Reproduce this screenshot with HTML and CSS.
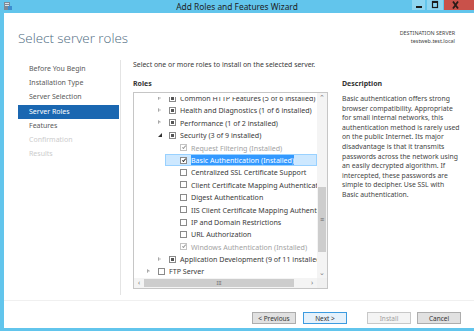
FILE: index.html
```html
<!DOCTYPE html>
<html lang="en">
<head>
<meta charset="UTF-8">
<meta name="viewport" content="width=device-width, initial-scale=1.0">
<title>Add Roles and Features Wizard</title>
<link rel="stylesheet" href="styles.css">
</head>
<body>
<!-- Barra de titulo -->
<div class="titlebar">
 <div class="app-icon">
  <svg width="10" height="10" viewBox="0 0 10 10">
   <rect x="1" y="1" width="6" height="8" fill="#7d8a96"/>
   <rect x="2" y="2" width="4" height="1" fill="#d9e2ea"/>
   <rect x="2" y="4" width="4" height="1" fill="#d9e2ea"/>
   <rect x="5" y="5" width="4" height="4" fill="#3b8ed0"/>
  </svg>
 </div>
 <div class="title">Add Roles and Features Wizard</div>
 <div class="caption-buttons">
  <span class="cap-btn cap-min"><svg width="13" height="10" viewBox="0 0 13 10"><rect x="4" y="6" width="6" height="2" fill="#1c1c1c"/></svg></span>
  <span class="cap-btn cap-max"><svg width="16" height="10" viewBox="0 0 16 10"><rect x="5.5" y="1.5" width="5" height="6" fill="none" stroke="#1c1c1c" stroke-width="1.2"/><rect x="5" y="1" width="6" height="2" fill="#1c1c1c"/></svg></span>
  <span class="cap-btn cap-close"><svg width="30" height="10" viewBox="0 0 30 10"><path d="M9 1.5 L14 8.5 M14 1.5 L9 8.5" stroke="#2a1a18" stroke-width="1.8"/></svg></span>
 </div>
</div>

<div class="frame">
 <!-- Encabezado -->
 <div class="header">
  <h1>Select server roles</h1>
  <div class="destination">
   <div>DESTINATION SERVER</div>
   <div>testweb.test.local</div>
  </div>
 </div>

 <div class="body">
  <!-- Pasos del asistente -->
  <ul class="steps">
   <li>Before You Begin</li>
   <li>Installation Type</li>
   <li>Server Selection</li>
   <li class="current">Server Roles</li>
   <li>Features</li>
   <li class="pending">Confirmation</li>
   <li class="pending">Results</li>
  </ul>

  <div class="main">
   <p class="intro">Select one or more roles to install on the selected server.</p>
   <div class="columns">
    <div class="roles">
     <div class="label">Roles</div>
     <div class="tree-box">
      <div class="tree-view">
       <ul class="tree">
        <li class="row lvl1"><span class="exp"></span><span class="cb part"></span><span>Common HTTP Features (5 of 6 installed)</span></li>
        <li class="row lvl1"><span class="exp"></span><span class="cb part"></span><span>Health and Diagnostics (1 of 6 installed)</span></li>
        <li class="row lvl1"><span class="exp"></span><span class="cb part"></span><span>Performance (1 of 2 installed)</span></li>
        <li class="row lvl1"><span class="exp open"></span><span class="cb part"></span><span>Security (3 of 9 installed)</span></li>
        <li class="row lvl2 off"><span class="exp none"></span><span class="cb on"></span><span>Request Filtering (Installed)</span></li>
        <li class="row lvl2 selected"><span class="exp none"></span><span class="cb on"></span><span class="sel-text">Basic Authentication (Installed)</span></li>
        <li class="row lvl2"><span class="exp none"></span><span class="cb"></span><span>Centralized SSL Certificate Support</span></li>
        <li class="row lvl2"><span class="exp none"></span><span class="cb"></span><span>Client Certificate Mapping Authentication</span></li>
        <li class="row lvl2"><span class="exp none"></span><span class="cb"></span><span>Digest Authentication</span></li>
        <li class="row lvl2"><span class="exp none"></span><span class="cb"></span><span>IIS Client Certificate Mapping Authentication</span></li>
        <li class="row lvl2"><span class="exp none"></span><span class="cb"></span><span>IP and Domain Restrictions</span></li>
        <li class="row lvl2"><span class="exp none"></span><span class="cb"></span><span>URL Authorization</span></li>
        <li class="row lvl2 off"><span class="exp none"></span><span class="cb on"></span><span>Windows Authentication (Installed)</span></li>
        <li class="row lvl1"><span class="exp"></span><span class="cb part"></span><span>Application Development (9 of 11 installed)</span></li>
        <li class="row lvl0"><span class="exp"></span><span class="cb"></span><span>FTP Server</span></li>
       </ul>
      </div>
      <div class="vscroll">
       <span class="arrow">&#8963;</span>
       <div class="vtrack"><div class="vthumb">&#8801;</div></div>
       <span class="arrow">&#8964;</span>
      </div>
      <div class="hscroll">
       <span class="arrow">&lsaquo;</span>
       <div class="htrack"><div class="hthumb">III</div></div>
       <span class="arrow">&rsaquo;</span>
      </div>
      <div class="corner"></div>
     </div>
    </div>

    <div class="description">
     <div class="label">Description</div>
     <p>Basic authentication offers strong<br>
      browser compatibility. Appropriate<br>
      for small internal networks, this<br>
      authentication method is rarely used<br>
      on the public Internet. Its major<br>
      disadvantage is that it transmits<br>
      passwords across the network using<br>
      an easily decrypted algorithm. If<br>
      intercepted, these passwords are<br>
      simple to decipher. Use SSL with<br>
      Basic authentication.</p>
    </div>
   </div>
  </div>
 </div>

 <!-- Botones -->
 <div class="footer">
  <button class="btn">&lt; Previous</button>
  <button class="btn default">Next &gt;</button>
  <button class="btn install" disabled>Install</button>
  <button class="btn">Cancel</button>
 </div>
</div>
</body>
</html>
```

FILE: styles.css
```css
body {
 margin: 0;
 width: 474px;
 height: 331px;
 overflow: hidden;
 font-family: "Noto Sans", "Open Sans", sans-serif;
 font-size: 7px;
 color: #3a3a3a;
 background: #62c5ec;
 display: flex;
 flex-direction: column;
}
ul {
 list-style: none;
 margin: 0;
 padding: 0;
}

/* barra de titulo */
.titlebar {
 height: 13px;
 display: grid;
 grid-template-columns: 1fr auto 1fr;
 align-items: start;
}
.app-icon {
 padding: 1px 0 0 3px;
 height: 10px;
}
.title {
 font-size: 8.4px;
 line-height: 13px;
 color: #1e1e1e;
}
.caption-buttons {
 justify-self: end;
 display: flex;
 height: 10px;
}
.cap-btn {
 display: block;
 height: 10px;
}
.cap-min {
 width: 13px;
 background: #8ed6f2;
 margin-right: 2px;
}
.cap-max {
 width: 16px;
 background: #8ed6f2;
 margin-right: 1px;
}
.cap-close {
 width: 30px;
 background: #c9514a;
}

/* marco */
.frame {
 flex: 1;
 background: #fff;
 margin: 0 0 3px 4px;
 display: flex;
 flex-direction: column;
}
.header {
 height: 44px;
 display: flex;
 justify-content: space-between;
 padding: 0 19px 0 14px;
}
.header h1 {
 margin: 16px 0 0;
 font-family: "Open Sans", sans-serif;
 font-weight: 300;
 font-size: 13.4px;
 line-height: 18px;
 color: #4d6a80;
}
.destination {
 margin-top: 16px;
 text-align: right;
 font-size: 5.4px;
 line-height: 8px;
 color: #444;
}

.body {
 height: 243px;
 display: flex;
}
.steps {
 width: 101px;
 flex: none;
 padding: 2px 1px 0 14px;
 margin: 3px 0 5px;
 border-right: 1px solid #e4e4e4;
}
.steps li {
 height: 14.2px;
 line-height: 14.2px;
 padding-left: 11px;
 color: #5a5a5a;
}
.steps li.current {
 background: #1a67b1;
 color: #fff;
}
.steps li.pending {
 color: #cccccc;
}

.main {
 flex: 1;
 min-width: 0;
 padding: 3px 0 0 12px;
}
.intro {
 margin: 0;
 line-height: 10px;
 font-size: 6.9px;
 white-space: nowrap;
}
.columns {
 display: flex;
 margin-top: 9px;
}
.label {
 font-weight: bold;
 line-height: 10px;
 color: #333;
}

/* arbol de roles */
.tree-box {
 margin-top: 3px;
 width: 193px;
 border: 1px solid #c6c6c6;
 display: grid;
 grid-template-columns: 183px 10px;
 grid-template-rows: 185px 10px;
}
.tree-view {
 overflow: hidden;
 margin-top: 4px;
}
.tree {
 margin-top: -5px;
}
.row {
 height: 12.4px;
 line-height: 12.4px;
 display: flex;
 align-items: center;
 white-space: nowrap;
 padding-left: 4px;
 box-sizing: border-box;
 font-size: 7.1px;
}
.lvl0 { margin-left: 9px; }
.lvl1 { margin-left: 20px; }
.lvl2 { margin-left: 31px; }
.row.off {
 color: #a3a3a3;
}
.row.selected {
 background: #cde8ff;
 outline: 1px solid #99d1ff;
 outline-offset: -1px;
}
.sel-text {
 background: #3399ff;
 color: #fff;
}
.exp {
 width: 11px;
 height: 7px;
 flex: none;
 position: relative;
}
.exp::before {
 content: "";
 position: absolute;
 left: 0;
 top: 1px;
 border-left: 3px solid #a8a8a8;
 border-top: 2.5px solid transparent;
 border-bottom: 2.5px solid transparent;
}
.exp::after {
 content: "";
 position: absolute;
 left: 0.7px;
 top: 2.4px;
 border-left: 1.4px solid #fff;
 border-top: 1.1px solid transparent;
 border-bottom: 1.1px solid transparent;
}
.exp.open::before {
 top: 1px;
 border: none;
 border-right: 4px solid #333;
 border-top: 4px solid transparent;
}
.exp.open::after,
.exp.none::before,
.exp.none::after {
 display: none;
}
.cb {
 width: 5px;
 height: 5px;
 flex: none;
 border: 1px solid #8a8a8a;
 background: #fff;
 margin-right: 4px;
 position: relative;
}
.cb.part::after {
 content: "";
 position: absolute;
 left: 1px;
 top: 1px;
 width: 3px;
 height: 3px;
 background: #555;
}
.cb.on::after {
 content: "";
 position: absolute;
 left: 1.6px;
 top: 0;
 width: 1.4px;
 height: 3px;
 border-right: 1px solid #333;
 border-bottom: 1px solid #333;
 transform: rotate(40deg);
}
.off .cb {
 border-color: #c4c4c4;
}
.off .cb.on::after {
 border-color: #9a9a9a;
}

/* barras de desplazamiento */
.vscroll {
 background: #f4f4f4;
 display: flex;
 flex-direction: column;
}
.arrow {
 flex: none;
 width: 10px;
 height: 10px;
 line-height: 10px;
 text-align: center;
 font-size: 7px;
 color: #7a7a7a;
}
.vtrack {
 flex: 1;
}
.vthumb {
 margin: 84px 1px 0;
 height: 65px;
 background: #cdcdcd;
 text-align: center;
 line-height: 65px;
 font-size: 7px;
 color: #666;
}
.hscroll {
 background: #f4f4f4;
 display: flex;
}
.htrack {
 flex: 1;
}
.hthumb {
 margin: 1px 13px 0 0;
 height: 8px;
 background: #cdcdcd;
 text-align: center;
 line-height: 8px;
 font-size: 5px;
 color: #666;
}
.corner {
 background: #f0f0f0;
}

.description {
 margin-left: 14px;
 white-space: nowrap;
}
.description p {
 margin: 5px 0 0;
 line-height: 9.6px;
 font-size: 6.8px;
 color: #444;
}

/* botones */
.footer {
 flex: 1;
 display: flex;
 align-items: flex-start;
 padding: 11px 13px 0 0;
 justify-content: flex-end;
 border-top: 1px solid #f0f0f0;
}
.btn {
 width: 44px;
 height: 12px;
 padding: 0;
 margin-left: 6px;
 font-family: inherit;
 font-size: 6.5px;
 color: #333;
 background: #e1e1e1;
 border: 1px solid #adadad;
}
.btn.default {
 margin-left: 7px;
 background: #e5f1fb;
 border-color: #3c9be0;
}
.btn.install {
 margin-left: 20px;
 background: #f4f4f4;
 border-color: #c8c8c8;
 color: #a0a0a0;
}
```
